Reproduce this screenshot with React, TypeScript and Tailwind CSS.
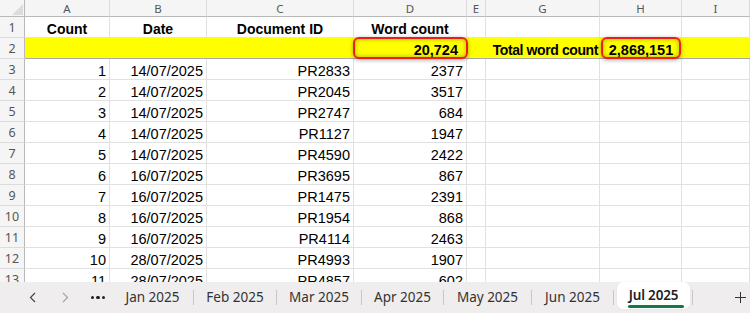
const cols = ["A", "B", "C", "D", "E", "G", "H", "I"];

const rows = [
  [1, "14/07/2025", "PR2833", 2377],
  [2, "14/07/2025", "PR2045", 3517],
  [3, "14/07/2025", "PR2747", 684],
  [4, "14/07/2025", "PR1127", 1947],
  [5, "14/07/2025", "PR4590", 2422],
  [6, "16/07/2025", "PR3695", 867],
  [7, "16/07/2025", "PR1475", 2391],
  [8, "16/07/2025", "PR1954", 868],
  [9, "16/07/2025", "PR4114", 2463],
  [10, "28/07/2025", "PR4993", 1907],
  [11, "28/07/2025", "PR4857", 602],
];

const tabs = [
  { name: "Jan 2025", w: "w-[81px]" },
  { name: "Feb 2025", w: "w-[82px]" },
  { name: "Mar 2025", w: "w-[84px]" },
  { name: "Apr 2025", w: "w-[81px]" },
  { name: "May 2025", w: "w-[87px]" },
  { name: "Jun 2025", w: "w-[81px]" },
];

const cell = "h-[21px] border-r border-b border-[#e1e1e1] bg-white leading-[24px] whitespace-nowrap";
const rowHead =
  "h-[21px] border-r border-b border-r-[#b9b9b9] border-b-[#dcdcdc] bg-[#f5f5f5] text-center font-['Noto_Sans',sans-serif] text-[12.5px] leading-[21px] text-[#555]";

function RedBox({ className }: { className: string }) {
  return (
    <div
      className={`absolute rounded-[6px] border-2 border-[#f01c1c] shadow-[0_1px_4px_rgba(0,0,0,0.35),inset_0_0_5px_rgba(0,0,0,0.3)] ${className}`}
    />
  );
}

export default function App() {
  return (
    <div className="w-[750px] h-[313px] flex flex-col overflow-hidden bg-white font-['Liberation_Sans',Arial,sans-serif] text-[14.5px] text-black">
      <div className="h-[282px] overflow-hidden">
        <div className="grid grid-cols-[25px_85px_97px_147px_113px_19px_114px_82px_1fr]">
          {/* column headers */}
          <div className="relative h-[17px] border-r border-b border-[#b9b9b9] bg-[#f5f5f5]">
            <svg className="absolute left-[12px] top-[4px]" width="11" height="11" viewBox="0 0 11 11">
              <polygon points="11,0 11,11 0,11" fill="#dcdcdc" />
            </svg>
          </div>
          {cols.map((c) => (
            <div
              key={c}
              className="h-[17px] border-r border-b border-r-[#dadada] border-b-[#b9b9b9] bg-[#f5f5f5] text-center font-['Noto_Sans',sans-serif] text-[11.5px] leading-[17px] text-[#555]"
            >
              {c}
            </div>
          ))}

          {/* row 1 */}
          <div className={rowHead}>1</div>
          {["Count", "Date", "Document ID", "Word count"].map((h) => (
            <div key={h} className={`${cell} text-center font-bold text-[14px]`}>
              {h}
            </div>
          ))}
          <div className={cell} />
          <div className={cell} />
          <div className={cell} />
          <div className={cell} />

          {/* row 2 */}
          <div className={`${rowHead} border-b-[#a8a8a8]`}>2</div>
          <div className="h-[21px] border-b border-[#a8a8a8] bg-[#ffff00]" />
          <div className="h-[21px] border-b border-[#a8a8a8] bg-[#ffff00]" />
          <div className="h-[21px] border-b border-[#a8a8a8] bg-[#ffff00]" />
          <div className="relative h-[21px] border-b border-[#a8a8a8] bg-[#ffff00] pr-[9px] text-right font-bold leading-[24px]">
            20,724
            <RedBox className="-left-px -top-px w-[115px] h-[22px]" />
          </div>
          <div className="h-[21px] border-b border-[#a8a8a8] bg-[#ffff00]" />
          <div className="h-[21px] border-b border-[#a8a8a8] bg-[#ffff00] pr-[2px] text-right font-bold text-[14px] leading-[24px] whitespace-nowrap flex justify-end">
            <span className="tracking-[-0.4px]">Total word count</span>
          </div>
          <div className="relative h-[21px] border-b border-[#a8a8a8] bg-[#ffff00] text-center font-bold leading-[24px]">
            2,868,151
            <RedBox className="left-px -top-px w-[80px] h-[22px]" />
          </div>
          <div className="h-[21px] border-b border-[#a8a8a8] bg-[#ffff00]" />

          {/* data rows */}
          {rows.map(([n, date, id, words], i) => (
            <div key={i} className="contents">
              <div className={rowHead}>{i + 3}</div>
              <div className={`${cell} pr-[3px] text-right`}>{n}</div>
              <div className={`${cell} pr-[3px] text-right`}>{date}</div>
              <div className={`${cell} pr-[3px] text-right`}>{id}</div>
              <div className={`${cell} pr-[3px] text-right`}>{words}</div>
              <div className={cell} />
              <div className={cell} />
              <div className={cell} />
              <div className={cell} />
            </div>
          ))}
        </div>
      </div>

      {/* sheet tabs */}
      <div className="h-[31px] flex bg-[#f0edee] font-['Noto_Sans',sans-serif] text-[13.5px] text-[#333]">
        <div className="w-[112px] flex items-center gap-[9px] pl-[20px]">
          <div className="w-[24px] flex justify-center">
            <svg width="7" height="11" viewBox="0 0 7 11" fill="none" stroke="#444" strokeWidth="1.2">
              <path d="M6 1 L1.5 5.5 L6 10" />
            </svg>
          </div>
          <div className="w-[24px] flex justify-center">
            <svg width="7" height="11" viewBox="0 0 7 11" fill="none" stroke="#a5a5a5" strokeWidth="1.2">
              <path d="M1 1 L5.5 5.5 L1 10" />
            </svg>
          </div>
          <div className="w-[24px] flex justify-center gap-[2px]">
            <span className="w-[3.5px] h-[3.5px] rounded-full bg-[#222]" />
            <span className="w-[3.5px] h-[3.5px] rounded-full bg-[#222]" />
            <span className="w-[3.5px] h-[3.5px] rounded-full bg-[#222]" />
          </div>
        </div>
        {tabs.map((t) => (
          <div key={t.name} className="flex items-center">
            <div className={`${t.w} text-center`}>{t.name}</div>
            <div className="w-px h-[15px] bg-[#c9c6c7]" />
          </div>
        ))}
        <div className="ml-[3px] w-[73px] h-[27px] rounded-[6px] bg-white flex flex-col items-center pt-[4px] shadow-[0_0_2px_rgba(0,0,0,0.08)]">
          <span className="font-semibold text-[#222] leading-[18px] tracking-[-0.2px]">Jul 2025</span>
          <span className="mt-[1px] ml-[4px] w-[56px] h-[3px] rounded-full bg-[#107c41]" />
        </div>
        <div className="ml-[2px] self-center w-px h-[15px] bg-[#c9c6c7]" />
        <div className="ml-auto mr-[3px] w-[12px] flex items-center">
          <svg width="11" height="11" viewBox="0 0 11 11" stroke="#333" strokeWidth="1">
            <path d="M5.5 0 V11 M0 5.5 H11" />
          </svg>
        </div>
      </div>
    </div>
  );
}
